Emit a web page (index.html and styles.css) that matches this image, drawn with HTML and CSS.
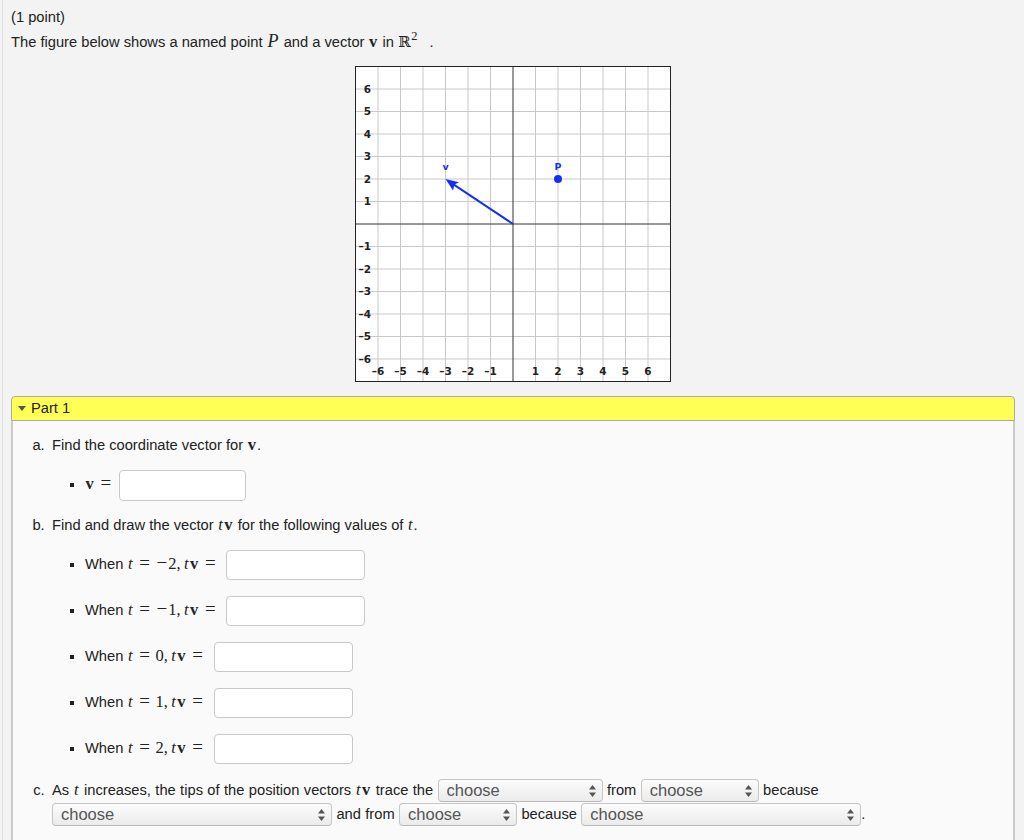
FILE: index.html
```
<!DOCTYPE html>
<html>
<head>
<meta charset="utf-8">
<link rel="stylesheet" href="styles.css">
</head>
<body>
<div class="problem">
  <p class="pts">(1 point)</p>
  <p class="intro">The figure below shows a named point <span class="mi big">P</span> and a vector <span class="mb">v</span> in <span class="bb">ℝ</span><sup class="sup">2</sup>.</p>
  <div class="graph">
    <svg width="316" height="316" viewBox="0 0 316 316">
      <rect x="0" y="0" width="316" height="316" fill="#fff"/>
      <path class="grid" d="M23 0V316M45.5 0V316M68 0V316M90.5 0V316M113 0V316M135.5 0V316M180.5 0V316M203 0V316M225.5 0V316M248 0V316M270.5 0V316M293 0V316M0 23H316M0 45.5H316M0 68H316M0 90.5H316M0 113H316M0 135.5H316M0 180.5H316M0 203H316M0 225.5H316M0 248H316M0 270.5H316M0 293H316"/>
      <path class="axis" d="M158 0V316M0 158H316"/>
      <rect class="frame" x="0.5" y="0.5" width="315" height="315"/>
      <g class="lbl">
        <text x="16" y="26.8" text-anchor="end">6</text>
        <text x="16" y="49.3" text-anchor="end">5</text>
        <text x="16" y="71.8" text-anchor="end">4</text>
        <text x="16" y="94.3" text-anchor="end">3</text>
        <text x="16" y="116.8" text-anchor="end">2</text>
        <text x="16" y="139.3" text-anchor="end">1</text>
        <text x="16" y="184.3" text-anchor="end">–1</text>
        <text x="16" y="206.8" text-anchor="end">–2</text>
        <text x="16" y="229.3" text-anchor="end">–3</text>
        <text x="16" y="251.8" text-anchor="end">–4</text>
        <text x="16" y="274.3" text-anchor="end">–5</text>
        <text x="16" y="296.8" text-anchor="end">–6</text>
        <text x="23" y="308.8" text-anchor="middle">–6</text>
        <text x="45.5" y="308.8" text-anchor="middle">–5</text>
        <text x="68" y="308.8" text-anchor="middle">–4</text>
        <text x="90.5" y="308.8" text-anchor="middle">–3</text>
        <text x="113" y="308.8" text-anchor="middle">–2</text>
        <text x="135.5" y="308.8" text-anchor="middle">–1</text>
        <text x="180.5" y="308.8" text-anchor="middle">1</text>
        <text x="203" y="308.8" text-anchor="middle">2</text>
        <text x="225.5" y="308.8" text-anchor="middle">3</text>
        <text x="248" y="308.8" text-anchor="middle">4</text>
        <text x="270.5" y="308.8" text-anchor="middle">5</text>
        <text x="293" y="308.8" text-anchor="middle">6</text>
      </g>
      <line class="vec" x1="158" y1="158" x2="97" y2="117.4"/>
      <polygon class="head" points="90.5,113 104,116.2 99.5,118.6 98,124.5"/>
      <circle class="pt" cx="203" cy="113" r="4"/>
      <text class="blbl" x="90.5" y="104" text-anchor="middle">v</text>
      <text class="blbl" x="203" y="104" text-anchor="middle">P</text>
    </svg>
  </div>
  <div class="part">
    <div class="part-head"><span class="tri"></span>Part 1</div>
    <div class="part-body">
      <ol class="qs">
        <li>
          <p class="q">Find the coordinate vector for <span class="mb">v</span>.</p>
          <ul class="ans">
            <li class="row row-a"><span class="mb">v</span><span class="mn eq">=</span> <input class="box box-a" type="text"></li>
          </ul>
        </li>
        <li>
          <p class="q">Find and draw the vector <span class="mi">t</span><span class="mb">v</span> for the following values of <span class="mi">t</span>.</p>
          <ul class="ans">
            <li class="row">When <span class="mi">t</span><span class="mn eq">=</span><span class="mn op">−</span><span class="mn">2,</span><span class="thin"></span><span class="mi">t</span><span class="mb">v</span><span class="mn eq">=</span> <input class="box box-b" type="text"></li>
            <li class="row">When <span class="mi">t</span><span class="mn eq">=</span><span class="mn op">−</span><span class="mn">1,</span><span class="thin"></span><span class="mi">t</span><span class="mb">v</span><span class="mn eq">=</span> <input class="box box-b" type="text"></li>
            <li class="row">When <span class="mi">t</span><span class="mn eq">=</span><span class="mn">0,</span><span class="thin"></span><span class="mi">t</span><span class="mb">v</span><span class="mn eq">=</span> <input class="box box-b" type="text"></li>
            <li class="row">When <span class="mi">t</span><span class="mn eq">=</span><span class="mn">1,</span><span class="thin"></span><span class="mi">t</span><span class="mb">v</span><span class="mn eq">=</span> <input class="box box-b" type="text"></li>
            <li class="row">When <span class="mi">t</span><span class="mn eq">=</span><span class="mn">2,</span><span class="thin"></span><span class="mi">t</span><span class="mb">v</span><span class="mn eq">=</span> <input class="box box-b" type="text"></li>
          </ul>
        </li>
        <li>
          <p class="qc">As <span class="mi">t</span> increases, the tips of the position vectors <span class="mi">t</span><span class="mb">v</span> trace the <span class="sel sel-m"><select><option>choose</option></select><svg class="updown" width="7" height="12" viewBox="0 0 7 12"><path d="M3.5 0L7 4.6H0ZM3.5 12L0 7.4H7Z"/></svg></span> from <span class="sel sel-s"><select><option>choose</option></select><svg class="updown" width="7" height="12" viewBox="0 0 7 12"><path d="M3.5 0L7 4.6H0ZM3.5 12L0 7.4H7Z"/></svg></span> because <span class="sel sel-l"><select><option>choose</option></select><svg class="updown" width="7" height="12" viewBox="0 0 7 12"><path d="M3.5 0L7 4.6H0ZM3.5 12L0 7.4H7Z"/></svg></span> and from <span class="sel sel-s"><select><option>choose</option></select><svg class="updown" width="7" height="12" viewBox="0 0 7 12"><path d="M3.5 0L7 4.6H0ZM3.5 12L0 7.4H7Z"/></svg></span> because <span class="sel sel-l"><select><option>choose</option></select><svg class="updown" width="7" height="12" viewBox="0 0 7 12"><path d="M3.5 0L7 4.6H0ZM3.5 12L0 7.4H7Z"/></svg></span>.</p>
        </li>
      </ol>
    </div>
  </div>
</div>
</body>
</html>
```
FILE: styles.css
```
* { box-sizing: border-box; }
html, body { margin: 0; padding: 0; }
body {
  background: #f3f3f3;
  font-family: "Liberation Sans", Arial, sans-serif;
  font-size: 14.7px;
  color: #222;
  overflow: hidden;
}
.problem {
  margin-left: 2px;
  border-left: 1px solid #dedede;
  padding: 8px 9px 0 8px;
  height: 840px;
}
.pts, .intro { margin: 0; line-height: 18px; }
.intro { margin-top: 6px; }

.mi, .mb, .mn {
  font-family: "Liberation Serif", "DejaVu Serif", serif;
  font-size: 16.5px;
  line-height: 1;
}
.mi { font-style: italic; padding: 0 1px 0 0.5px; }
.mi.big { font-size: 18px; padding: 0 1px 0 1px; }
.mb { font-weight: bold; padding: 0 1px 0 0.5px; }
.eq { display: inline-block; width: 12.8px; margin: 0 4.6px; text-align: center; font-size: 19px; }
.op { display: inline-block; width: 12.8px; text-align: center; font-size: 19px; }
.thin { display: inline-block; width: 2.75px; }
.bb { font-family: "DejaVu Serif", serif; font-size: 15px; line-height: 1; }
.sup { font-family: "Liberation Serif", serif; font-size: 12.5px; line-height: 0; vertical-align: 7px; padding: 0 12px 0 1px; }

.graph { margin-top: 15px; display: flex; justify-content: center; }
.graph svg { display: block; }
.grid { stroke: #c9c9c9; stroke-width: 1; fill: none; }
.axis { stroke: #333; stroke-width: 1; fill: none; }
.frame { stroke: #222; stroke-width: 1; fill: none; }
.lbl text { font-family: "DejaVu Sans", sans-serif; font-weight: bold; font-size: 10.5px; fill: #222; }
.vec { stroke: #1530f5; stroke-width: 2; }
.head { fill: #1530f5; }
.pt { fill: #1530f5; }
.blbl { font-family: "DejaVu Sans", sans-serif; font-weight: bold; font-size: 9.5px; fill: #1530f5; }

.part { margin-top: 14px; }
.part-head {
  height: 25px;
  border: 1px solid #aaa;
  border-radius: 4px 4px 0 0;
  background: #ffff55;
  padding-left: 6px;
  display: flex;
  align-items: center;
  line-height: 23px;
}
.tri {
  width: 0; height: 0;
  border-left: 4px solid transparent;
  border-right: 4px solid transparent;
  border-top: 5px solid #555;
  margin-right: 5px;
}
.part-body {
  background: #fafafa;
  border-left: 2px solid #cbcbcb;
  border-right: 2px solid #cbcbcb;
  padding-top: 14px;
  height: 440px;
}
.qs { list-style: lower-alpha; margin: 0; padding-left: 39px; }
.qs > li::marker { content: counter(list-item, lower-alpha) ".\2002"; }
.q { margin: 0; line-height: 20px; height: 20px; }
.qs > li + li { margin-top: 15px; }
.ans { list-style: square; margin: 14px 0 0; padding-left: 33px; }
.row { line-height: 30px; height: 30px; margin-bottom: 16px; }
.row-a { height: 31px; line-height: 31px; }
.row:last-child { margin-bottom: 0; }
.box {
  height: 30px;
  border: 1px solid #c9c9c9;
  border-radius: 4px;
  background: #fff;
  vertical-align: middle;
  margin: 0 0 0 1px;
  padding: 0;
}
.box-a { width: 127px; height: 31px; margin-left: -2px; }
.box-b { width: 139px; }
.qs > li:last-child { margin-top: 15px; }
.qc { margin: 0; line-height: 24px; word-spacing: 0.3px; }

.sel { position: relative; display: inline-block; vertical-align: top; margin-top: 1px; height: 23px; }
.sel-m { width: 165px; }
.sel-s { width: 118px; }
.sel-l { width: 280px; }
.sel select {
  -webkit-appearance: none;
  appearance: none;
  display: block;
  width: 100%;
  height: 23px;
  margin: 0;
  border: 1px solid #c6c6c6;
  border-bottom-color: #b9b9b9;
  border-radius: 4px;
  background: linear-gradient(#fcfcfc, #ebebeb);
  font-family: "Liberation Sans", Arial, sans-serif;
  font-size: 16.5px;
  color: #555;
  padding: 0 20px 0 8px;
  line-height: 21px;
}
.updown { position: absolute; right: 7px; top: 5.5px; pointer-events: none; fill: #555; }
```
